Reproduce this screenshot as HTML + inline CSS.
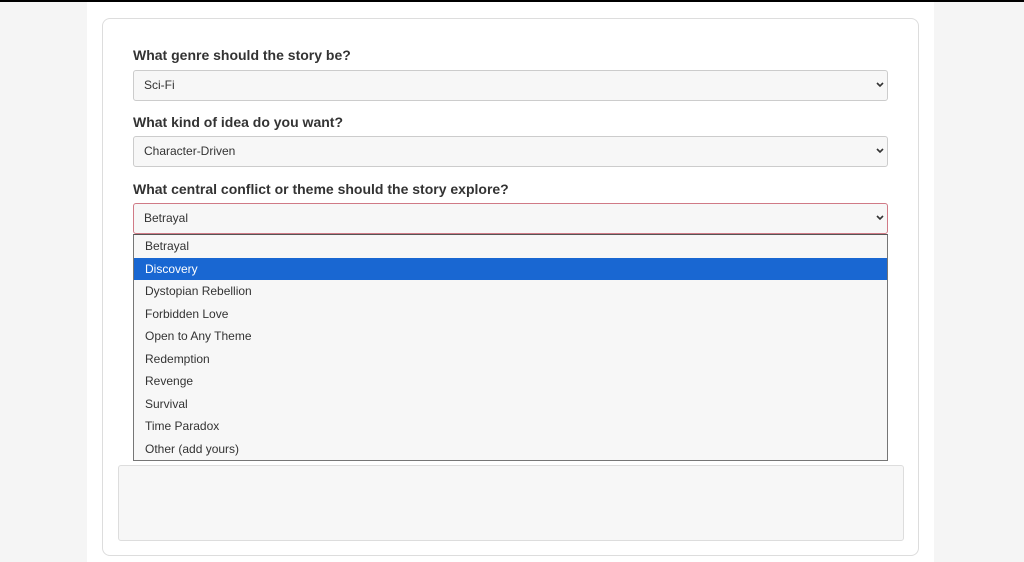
<!DOCTYPE html>
<html><head><style>
body{margin:0;background:#f5f5f5;font-family:"Liberation Sans",Arial,sans-serif;width:1024px;height:562px;overflow:hidden;position:relative}
.top{position:absolute;left:0;top:0;width:1024px;height:2px;background:#000}
.col{position:absolute;left:87px;top:2px;width:847px;height:560px;background:#fff}
.card{position:absolute;left:102px;top:18px;width:815px;height:536px;border:1px solid #ddd;border-radius:8px;background:#fff}
.lbl{position:absolute;left:133px;font-size:14px;font-weight:bold;color:#333}
.sel{position:absolute;left:133px;width:753px;height:29px;background:#f7f7f7;border:1px solid #ccc;border-radius:3px;font-size:12px;color:#333;line-height:29px;box-sizing:content-box}
.sel span{position:absolute;left:10px}
.sel svg{position:absolute;right:3px;top:11px}
.list{position:absolute;left:133px;top:234px;width:753px;height:225px;background:#f7f7f7;border:1px solid #767676;border-top:1px solid #555}
.opt{height:22.5px;line-height:22.5px;padding-left:11px;font-size:12px;color:#333}
.hl{background:#1967d2;color:#fff}
.ta{position:absolute;left:118px;top:465px;width:784px;height:74px;background:#f7f7f7;border:1px solid #ddd;border-radius:3px}
</style></head><body>
<div class="top"></div><div class="col"></div><div class="card"></div>
<div class="lbl" style="top:47px">What genre should the story be?</div>
<div class="sel" style="top:70px"><span>Sci-Fi</span><svg width="8" height="6"><path d="M1 1L4 4L7 1" stroke="#333" stroke-width="1.6" fill="none"/></svg></div>
<div class="lbl" style="top:114px">What kind of idea do you want?</div>
<div class="sel" style="top:136px"><span>Character-Driven</span><svg width="8" height="6"><path d="M1 1L4 4L7 1" stroke="#333" stroke-width="1.6" fill="none"/></svg></div>
<div class="lbl" style="top:181px">What central conflict or theme should the story explore?</div>
<div class="sel" style="top:203px;border-color:#d07a86"><span>Betrayal</span><svg width="8" height="6"><path d="M1 1L4 4L7 1" stroke="#333" stroke-width="1.6" fill="none"/></svg></div>
<div class="list">
<div class="opt">Betrayal</div><div class="opt hl">Discovery</div><div class="opt">Dystopian Rebellion</div><div class="opt">Forbidden Love</div><div class="opt">Open to Any Theme</div><div class="opt">Redemption</div><div class="opt">Revenge</div><div class="opt">Survival</div><div class="opt">Time Paradox</div><div class="opt">Other (add yours)</div>
</div>
<div class="ta"></div>
</body></html>
